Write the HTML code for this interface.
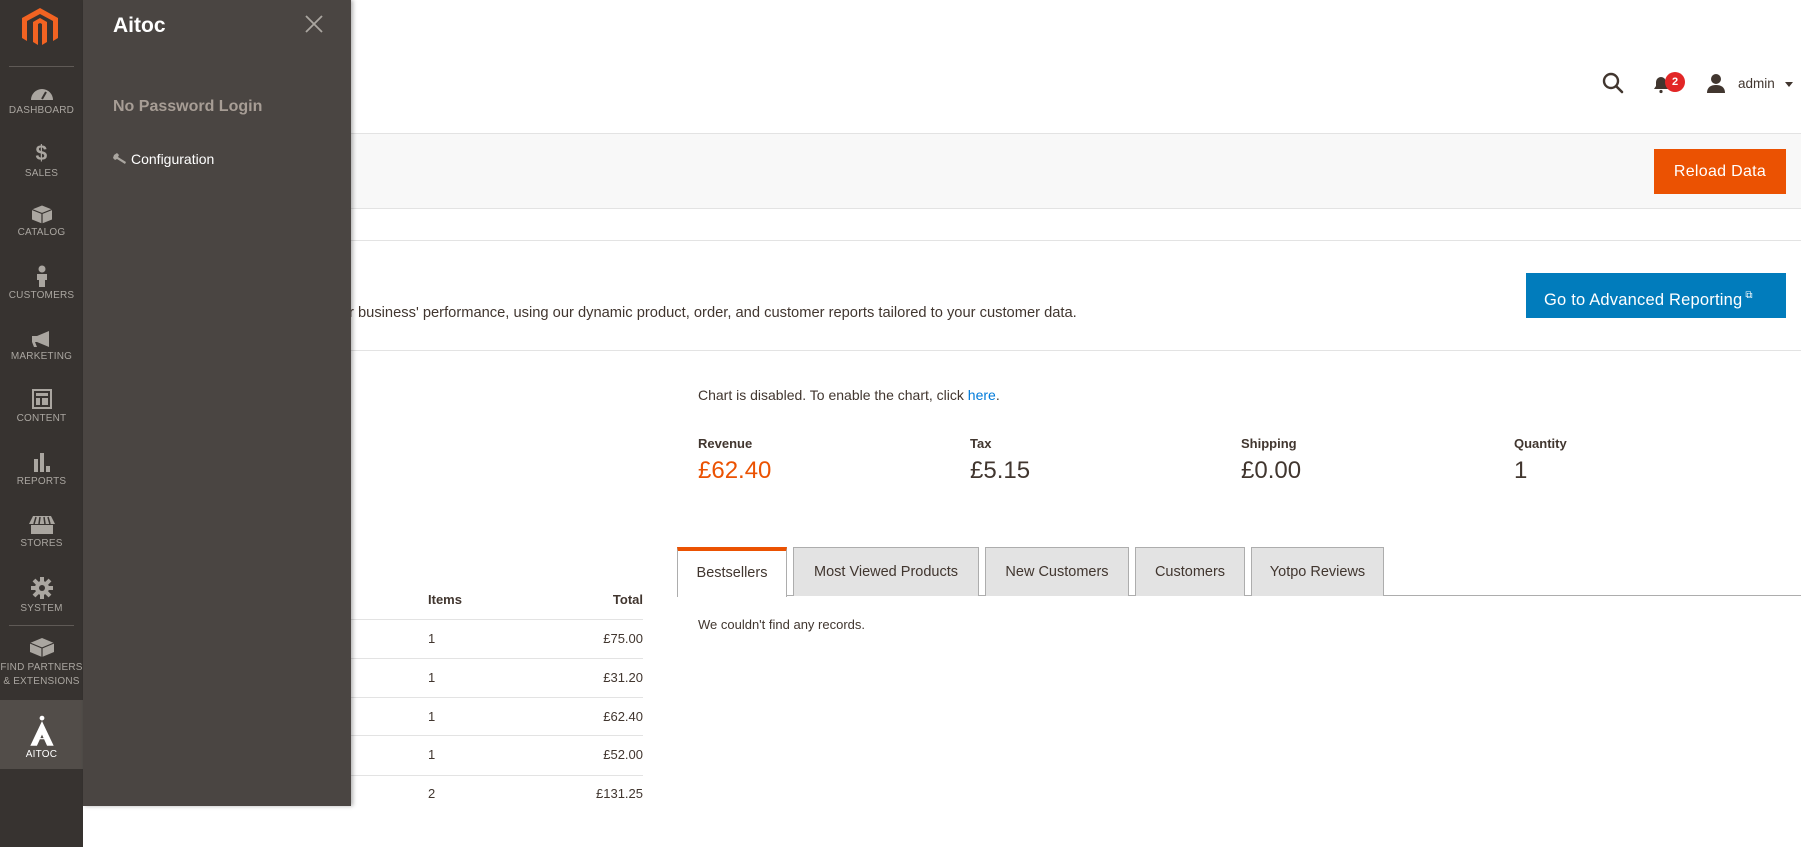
<!DOCTYPE html>
<html><head><meta charset="utf-8"><style>
*{margin:0;padding:0;box-sizing:border-box}
body{width:1807px;height:847px;overflow:hidden;background:#fff;font-family:"Liberation Sans",sans-serif;color:#41362f;position:relative;font-size:14px}
.a{position:absolute}
.side{left:0;top:0;width:83px;height:847px;background:#373330}
.mi{position:absolute;left:0;width:83px;text-align:center;color:#aaa6a0;font-size:10px;letter-spacing:.2px}
.mi svg{display:block;margin:0 auto 3px}
.panel{left:83px;top:0;width:268px;height:806px;background:#4a4542;box-shadow:2px 0 4px rgba(0,0,0,.3)}
.line{position:absolute;height:1px;background:#e3e3e3}
.tab{position:absolute;top:547px;height:49px;background:#e3e3e3;border:1px solid #adadad;border-bottom:none;font-size:14.5px;color:#41362f;text-align:center;line-height:48px}
.row{position:absolute;font-size:13px;color:#41362f}
</style></head><body>
<!-- header -->
<svg class="a" style="left:1602px;top:72px" width="22" height="22" viewBox="0 0 22 22"><circle cx="9" cy="9" r="7" fill="none" stroke="#41362f" stroke-width="2.4"/><path d="M14 14l6 6" stroke="#41362f" stroke-width="2.6" stroke-linecap="round"/></svg>
<svg class="a" style="left:1652px;top:73px" width="18" height="22" viewBox="0 0 18 22"><path d="M2 16h14l-2-3V9a5 5 0 0 0-10 0v4z" fill="#41362f"/><circle cx="9" cy="18.5" r="1.6" fill="#41362f"/></svg>
<div class="a" style="left:1665px;top:72px;width:20px;height:20px;border-radius:50%;background:#e22626;color:#fff;font-size:11px;font-weight:bold;text-align:center;line-height:20px">2</div>
<svg class="a" style="left:1706px;top:73px" width="20" height="20" viewBox="0 0 20 20"><circle cx="10" cy="6" r="5" fill="#41362f"/><path d="M1 20c0-6 4-8 9-8s9 2 9 8z" fill="#41362f"/></svg>
<div class="a" style="left:1738px;top:76px;font-size:13.5px;color:#41362f">admin</div>
<div class="a" style="left:1785px;top:82px;border-left:4px solid transparent;border-right:4px solid transparent;border-top:5px solid #41362f"></div>
<div class="a" style="left:83px;top:133px;width:1718px;height:76px;background:#f8f8f8;border-top:1px solid #e3e3e3;border-bottom:1px solid #e3e3e3"></div>
<div class="a" style="left:1654px;top:149px;width:132px;height:45px;background:#eb5202;color:#fff;font-size:16px;text-align:center;line-height:45px;letter-spacing:.3px">Reload Data</div>
<div class="line" style="left:83px;top:240px;width:1718px"></div>
<div class="a" style="left:120px;top:264px;font-size:20px;color:#41362f">Advanced Reporting</div>
<div class="a" style="left:60px;top:305px;font-size:14.7px;color:#41362f">Gain new insights and take command of your business' performance, using our dynamic product, order, and customer reports tailored to your customer data.</div>
<div class="a" style="left:1526px;top:273px;width:260px;height:45px;background:#017cbc;color:#fff;font-size:16.5px;line-height:45px;padding-left:18px;letter-spacing:.2px">Go to Advanced Reporting<span style="font-size:10px;vertical-align:7px;margin-left:3px">&#x29C9;</span></div>
<div class="line" style="left:83px;top:350px;width:1718px"></div>
<div class="a" style="left:698px;top:387px;font-size:14px">Chart is disabled. To enable the chart, click <span style="color:#007bdb">here</span>.</div>
<div class="a" style="left:698px;top:436px;font-size:13px;font-weight:bold">Revenue</div>
<div class="a" style="left:698px;top:457px;font-size:24px;color:#eb5202">£62.40</div>
<div class="a" style="left:970px;top:436px;font-size:13px;font-weight:bold">Tax</div>
<div class="a" style="left:970px;top:457px;font-size:24px">£5.15</div>
<div class="a" style="left:1241px;top:436px;font-size:13px;font-weight:bold">Shipping</div>
<div class="a" style="left:1241px;top:457px;font-size:24px">£0.00</div>
<div class="a" style="left:1514px;top:436px;font-size:13px;font-weight:bold">Quantity</div>
<div class="a" style="left:1514px;top:457px;font-size:24px">1</div>
<!-- tabs -->
<div class="a" style="left:677px;top:595px;width:1124px;height:1px;background:#adadad"></div>
<div class="tab" style="left:677px;width:110px;background:#fff;border-top:4px solid #eb5202;height:50px;line-height:44px">Bestsellers</div>
<div class="tab" style="left:793px;width:186px">Most Viewed Products</div>
<div class="tab" style="left:985px;width:144px">New Customers</div>
<div class="tab" style="left:1135px;width:110px">Customers</div>
<div class="tab" style="left:1251px;width:133px">Yotpo Reviews</div>
<div class="a" style="left:698px;top:617px;font-size:13px">We couldn't find any records.</div>
<!-- table -->
<div class="row" style="left:428px;top:592px;font-weight:bold">Items</div>
<div class="row" style="left:600px;top:592px;width:43px;text-align:right;font-weight:bold">Total</div>
<div class="line" style="left:100px;top:619px;width:543px"></div>
<div class="line" style="left:100px;top:658px;width:543px"></div>
<div class="line" style="left:100px;top:697px;width:543px"></div>
<div class="line" style="left:100px;top:735px;width:543px"></div>
<div class="line" style="left:100px;top:775px;width:543px"></div>
<div class="row" style="left:428px;top:631px">1</div><div class="row" style="left:560px;top:631px;width:83px;text-align:right">£75.00</div>
<div class="row" style="left:428px;top:670px">1</div><div class="row" style="left:560px;top:670px;width:83px;text-align:right">£31.20</div>
<div class="row" style="left:428px;top:709px">1</div><div class="row" style="left:560px;top:709px;width:83px;text-align:right">£62.40</div>
<div class="row" style="left:428px;top:747px">1</div><div class="row" style="left:560px;top:747px;width:83px;text-align:right">£52.00</div>
<div class="row" style="left:428px;top:786px">2</div><div class="row" style="left:560px;top:786px;width:83px;text-align:right">£131.25</div>
<!-- sidebar -->
<div class="a side"></div>
<svg class="a" style="left:22px;top:8px" width="36" height="40" viewBox="0 0 36 40"><path d="M18 0L0 10v20l5 3V13l13-7 13 7v20l5-3V10z M18 10l-7 4v20l5 3V16l2-1 2 1v21l5-3V14z" fill="#f26322"/></svg>
<div class="a" style="left:9px;top:66px;width:65px;height:1px;background:#5f5a56"></div>
<div class="a" style="left:9px;top:625px;width:65px;height:1px;background:#5f5a56"></div>
<div class="mi" style="top:84px"><svg width="24" height="18" viewBox="0 0 24 16"><path d="M1 15A11 11 0 0 1 23 15z" fill="#aaa6a0"/><path d="M12 14l4-7" stroke="#373330" stroke-width="2"/></svg>DASHBOARD</div>
<div class="mi" style="top:143px"><div style="font-size:21px;font-weight:bold;line-height:22px;height:25px">$</div>SALES</div>
<div class="mi" style="top:205px"><svg width="20" height="19" viewBox="0 0 20 18"><path d="M10 0l10 4v10l-10 4-10-4V4z" fill="#aaa6a0"/><path d="M0 4l10 4 10-4M10 8v10" stroke="#373330" stroke-width="1.2" fill="none"/></svg>CATALOG</div>
<div class="mi" style="top:265px"><svg width="14" height="22" viewBox="0 0 14 22"><circle cx="7" cy="4" r="3.5" fill="#aaa6a0"/><path d="M2 9h10v6h-2v7H4v-7H2z" fill="#aaa6a0"/></svg>CUSTOMERS</div>
<div class="mi" style="top:330px"><svg width="24" height="18" viewBox="0 0 24 18"><path d="M2 6h5l12-5v16L7 12H5l2 5H4L2 12z" fill="#aaa6a0"/></svg>MARKETING</div>
<div class="mi" style="top:388px"><svg width="20" height="22" viewBox="0 0 20 20"><rect x="1" y="1" width="18" height="18" fill="none" stroke="#aaa6a0" stroke-width="2"/><rect x="4" y="4" width="12" height="3" fill="#aaa6a0"/><rect x="4" y="9" width="4" height="7" fill="#aaa6a0"/><rect x="10" y="9" width="6" height="7" fill="#aaa6a0"/></svg>CONTENT</div>
<div class="mi" style="top:451px"><svg width="20" height="22" viewBox="0 0 20 20"><rect x="2" y="7" width="4" height="13" fill="#aaa6a0"/><rect x="8" y="1" width="4" height="19" fill="#aaa6a0"/><rect x="14" y="14" width="4" height="6" fill="#aaa6a0"/></svg>REPORTS</div>
<div class="mi" style="top:515px"><svg width="26" height="20" viewBox="0 0 26 18"><path d="M4 0h18l4 8H0z" fill="#aaa6a0"/><rect x="2" y="9" width="22" height="9" fill="#aaa6a0"/><path d="M7 1l-2 7M11 1l-1 7M15 1l1 7M19 1l2 7" stroke="#373330" stroke-width="1.5"/></svg>STORES</div>
<div class="mi" style="top:576px"><svg width="22" height="24" viewBox="0 0 22 22"><circle cx="11" cy="11" r="7" fill="#aaa6a0"/><path d="M11 0v22M0 11h22M3 3l16 16M19 3L3 19" stroke="#aaa6a0" stroke-width="4"/><circle cx="11" cy="11" r="3" fill="#373330"/></svg>SYSTEM</div>
<div class="mi" style="top:636px;line-height:14px"><svg width="26" height="22" viewBox="0 0 26 20"><path d="M13 1l12 5v9l-12 5-12-5V6z" fill="#aaa6a0"/><path d="M1 6l12 5 12-5M13 11v9" stroke="#373330" stroke-width="1.2" fill="none"/></svg>FIND PARTNERS<br>&amp; EXTENSIONS</div>
<div class="a" style="left:0;top:700px;width:83px;height:69px;background:#524d49"></div>
<div class="mi" style="top:714px;color:#fff"><svg width="26" height="32" viewBox="0 0 24 28"><circle cx="12" cy="3" r="2.2" fill="#fff"/><path d="M12 7L2 28h5l5-11 5 11h5z M8 22h8" fill="#fff" stroke="#fff"/></svg>AITOC</div>
<!-- panel -->
<div class="a panel"></div>
<div class="a" style="left:113px;top:14px;font-size:21px;font-weight:bold;color:#fff">Aitoc</div>
<svg class="a" style="left:305px;top:15px" width="18" height="18" viewBox="0 0 18 18"><path d="M1 1l16 16M17 1L1 17" stroke="#aaa6a0" stroke-width="1.8"/></svg>
<div class="a" style="left:113px;top:98px;font-size:16px;font-weight:bold;color:#a79d95">No Password Login</div>
<svg class="a" style="left:113px;top:152px" width="14" height="12" viewBox="0 0 14 12"><path d="M1 3l3-2 2 2-1 2 8 5-1 2-8-5-2 1-2-2z" fill="#aaa6a0"/></svg>
<div class="a" style="left:131px;top:151px;font-size:14px;color:#fff">Configuration</div>
</body></html>
